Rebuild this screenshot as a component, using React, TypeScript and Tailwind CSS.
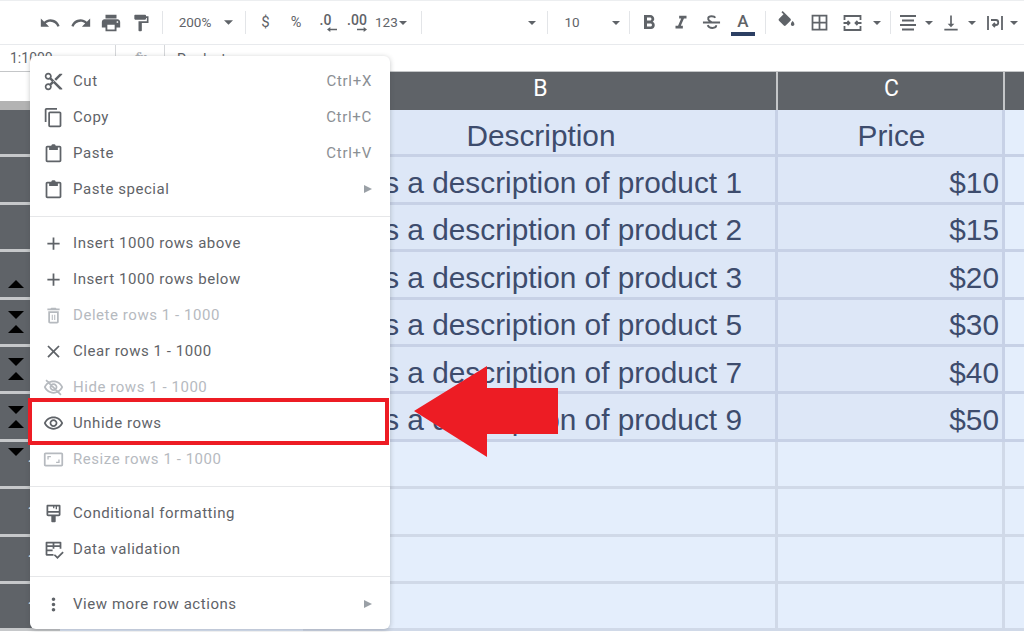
import React from "react";

const P = {
  undo: "M12.5 8c-2.65 0-5.05.99-6.9 2.6L2 7v9h9l-3.62-3.62c1.39-1.16 3.16-1.88 5.12-1.88 3.54 0 6.55 2.31 7.6 5.5l2.37-.78C21.08 11.03 17.15 8 12.5 8z",
  redo: "M18.4 10.6C16.55 8.99 14.15 8 11.5 8c-4.65 0-8.58 3.03-9.96 7.22L3.9 16c1.05-3.19 4.05-5.5 7.6-5.5 1.95 0 3.73.72 5.12 1.88L13 16h9V7l-3.6 3.6z",
  print: "M19 8H5c-1.66 0-3 1.34-3 3v6h4v4h12v-4h4v-6c0-1.66-1.34-3-3-3zm-3 11H8v-5h8v5zm3-7c-.55 0-1-.45-1-1s.45-1 1-1 1 .45 1 1-.45 1-1 1zm-1-9H6v4h12V3z",
  paint: "M18 4V3c0-.55-.45-1-1-1H5c-.55 0-1 .45-1 1v4c0 .55.45 1 1 1h12c.55 0 1-.45 1-1V6h1v4H9v11c0 .55.45 1 1 1h2c.55 0 1-.45 1-1v-9h8V4h-3z",
  bold: "M15.6 10.79c.97-.67 1.65-1.77 1.65-2.79 0-2.26-1.75-4-4-4H7v14h7.04c2.09 0 3.71-1.7 3.71-3.79 0-1.52-.86-2.82-2.15-3.42zM10 6.5h3c.83 0 1.5.67 1.5 1.5s-.67 1.5-1.5 1.5h-3v-3zm3.5 9H10v-3h3.5c.83 0 1.5.67 1.5 1.5s-.67 1.5-1.5 1.5z",
  italic: "M10 4v3h2.21l-3.42 8H6v3h8v-3h-2.21l3.42-8H18V4z",
  fill: "M16.56 8.94L7.62 0 6.21 1.41l2.38 2.38-5.15 5.15c-.59.59-.59 1.54 0 2.12l5.5 5.5c.29.29.68.44 1.06.44s.77-.15 1.06-.44l5.5-5.5c.59-.58.59-1.53 0-2.12zM19 11.5s-2 2.17-2 3.5c0 1.1.9 2 2 2s2-.9 2-2c0-1.33-2-3.5-2-3.5z",
  borders: "M3 3v18h18V3H3zm8 16H5v-6h6v6zm0-8H5V5h6v6zm8 8h-6v-6h6v6zm0-8h-6V5h6v6z",
  valign: "M16 13h-3V3h-2v10H8l4 4 4-4zM4 19v2h16v-2H4z",
  cut: "M9.64 7.64c.23-.5.36-1.05.36-1.64 0-2.21-1.79-4-4-4S2 3.79 2 6s1.79 4 4 4c.59 0 1.14-.13 1.64-.36L10 12l-2.36 2.36C7.14 14.13 6.59 14 6 14c-2.21 0-4 1.79-4 4s1.79 4 4 4 4-1.79 4-4c0-.59-.13-1.14-.36-1.64L12 14l7 7h3v-1L9.64 7.64zM6 8c-1.1 0-2-.89-2-2s.9-2 2-2 2 .89 2 2-.9 2-2 2zm0 12c-1.1 0-2-.89-2-2s.9-2 2-2 2 .89 2 2-.9 2-2 2zm6-7.5c-.28 0-.5-.22-.5-.5s.22-.5.5-.5.5.22.5.5-.22.5-.5.5zM19 3l-6 6 2 2 7-7V3z",
  copy: "M16 1H4c-1.1 0-2 .9-2 2v14h2V3h12V1zm3 4H8c-1.1 0-2 .9-2 2v14c0 1.1.9 2 2 2h11c1.1 0 2-.9 2-2V7c0-1.1-.9-2-2-2zm0 16H8V7h11v14z",
  add: "M19 13h-6v6h-2v-6H5v-2h6V5h2v6h6v2z",
  del: "M6 19c0 1.1.9 2 2 2h8c1.1 0 2-.9 2-2V7H6v12zM8 9h8v10H8V9zm7.5-5l-1-1h-5l-1 1H5v2h14V4zM10 11h1.2v6H10zM12.8 11H14v6h-1.2z",
  close: "M19 6.41L17.59 5 12 10.59 6.41 5 5 6.41 10.59 12 5 17.59 6.41 19 12 13.41 17.59 19 19 17.59 13.41 12z",
  eye: "M12 6c3.79 0 7.17 2.13 8.82 5.5C19.17 14.87 15.79 17 12 17s-7.17-2.13-8.82-5.5C4.83 8.13 8.21 6 12 6m0-2C7 4 2.73 7.11 1 11.5 2.73 15.89 7 19 12 19s9.27-3.11 11-7.5C21.27 7.11 17 4 12 4zm0 5c1.38 0 2.5 1.12 2.5 2.5S13.38 14 12 14s-2.5-1.12-2.5-2.5S10.62 9 12 9m0-2c-2.48 0-4.5 2.02-4.5 4.5S9.52 16 12 16s4.5-2.02 4.5-4.5S14.48 7 12 7z",
  eyeoff: "M12 6c3.79 0 7.17 2.13 8.82 5.5C19.17 14.87 15.79 17 12 17s-7.17-2.13-8.82-5.5C4.83 8.13 8.21 6 12 6m0-2C7 4 2.73 7.11 1 11.5 2.73 15.89 7 19 12 19s9.27-3.11 11-7.5C21.27 7.11 17 4 12 4zm0 5c1.38 0 2.5 1.12 2.5 2.5S13.38 14 12 14s-2.5-1.12-2.5-2.5S10.62 9 12 9m0-2c-2.48 0-4.5 2.02-4.5 4.5S9.52 16 12 16s4.5-2.02 4.5-4.5S14.48 7 12 7zM4.2 2.8L2.8 4.2l17 17 1.4-1.4z",
  paste: "M19 3h-4.5c-.2-1-1-1.6-2.5-1.6S9.700 2 9.500 3H5c-1.1 0-2 .9-2 2v15c0 1.1.9 2 2 2h14c1.100 0 2-.9 2-2V5c0-1.100-.9-2-2-2zm0 17H5V5h2v3h10V5h2v15z",
  roller: "M5 2h14c.55 0 1 .45 1 1v10c0 1.100-.9 2-2 2h-3.500v6c0 .55-.45 1-1 1h-3c-.55 0-1-.45-1-1v-6H6c-1.100 0-2-.9-2-2V3c0-.55.45-1 1-1zm1 2v5h12V4h-2v3h-1.500V4h-1.500v2h-1.500V4zm0 7v2h12v-2z",
  table: "M3 3h17c.55 0 1 .45 1 1v7h-2V9h-6v2h-2V9H5v3h6v2H5v3h7v2H4c-.55 0-1-.45-1-1V4c0-.55.45-1 1-1zm2 2v2h6V5zm8 0v2h6V5zm9.300 9.300l1.400 1.400-7.200 7.200-4.200-4.200 1.400-1.400 2.800 2.800z",
  resize: "M3 4h18c1.100 0 2 .9 2 2v12c0 1.100-.9 2-2 2H3c-1.100 0-2-.9-2-2V6c0-1.100.9-2 2-2zm0 2v12h18V6zm2 2h4v1.500H6.500V12H5zm14 8h-4v-1.500h2.500V12H19z",
  more: "M12 8c1.100 0 2-.9 2-2s-.9-2-2-2-2 .9-2 2 .9 2 2 2zm0 2c-1.100 0-2 .9-2 2s.9 2 2 2 2-.9 2-2-.9-2-2-2zm0 6c-1.100 0-2 .9-2 2s.9 2 2 2 2-.9 2-2-.9-2-2-2z",
};

function Ico({ d, cls }: { d: string; cls: string }) {
  return (
    <svg viewBox="0 0 24 24" className={cls} fill="currentColor" aria-hidden="true">
      <path d={d} />
    </svg>
  );
}

function Caret({ cls = "w-[8px] h-[4px]" }: { cls?: string }) {
  return (
    <svg viewBox="0 0 10 5" className={`${cls} shrink-0`} fill="currentColor" aria-hidden="true">
      <path d="M0 0h10L5 5z" />
    </svg>
  );
}

function Sep() {
  return <div className="w-px h-[23px] bg-[#e3e5e8] shrink-0" />;
}

function Slot({ w, children }: { w: string; children?: React.ReactNode }) {
  return <div className={`${w} shrink-0 flex items-center justify-center`}>{children}</div>;
}

function Toolbar() {
  return (
    <div className="h-[43px] shrink-0 border-b border-[#e8eaed] flex items-center pl-[34px] text-[#5f6368] text-[13.5px] pb-[1px] font-['Roboto',sans-serif]">
      <Slot w="w-[31px]"><Ico d={P.undo} cls="w-[22px] h-[22px]" /></Slot>
      <Slot w="w-[31px]"><Ico d={P.redo} cls="w-[22px] h-[22px]" /></Slot>
      <Slot w="w-[30px]"><Ico d={P.print} cls="w-[22px] h-[22px]" /></Slot>
      <Slot w="w-[30px]"><Ico d={P.paint} cls="w-[20px] h-[20px]" /></Slot>
      <div className="w-[6px] shrink-0" />
      <Sep />
      <Slot w="w-[48px]"><span className="ml-[16px]">200%</span></Slot>
      <Slot w="w-[34px]"><Caret cls="w-[9px] h-[5px]" /></Slot>
      <Sep />
      <Slot w="w-[39px]"><span className="text-[15px]">$</span></Slot>
      <Slot w="w-[22px]"><span className="text-[14.5px]">%</span></Slot>
      <Slot w="w-[38px]">
        <span className="flex flex-col items-end leading-[13px] -mr-[5px]">
          <span className="font-medium text-[14px] pr-[6px]">.0</span>
          <svg viewBox="0 0 12 6" className="w-[10px] h-[5px]" fill="currentColor" aria-hidden="true"><path d="M0 3l4-3v2h8v2H4v2z" /></svg>
        </span>
      </Slot>
      <Slot w="w-[24px]">
        <span className="flex flex-col items-end leading-[13px]">
          <span className="font-medium text-[14px]">.00</span>
          <svg viewBox="0 0 12 6" className="w-[10px] h-[5px]" fill="currentColor" aria-hidden="true"><path d="M12 3L8 0v2H0v2h8v2z" /></svg>
        </span>
      </Slot>
      <div className="w-[52px] shrink-0 flex items-center gap-[1px] pl-[6px]">
        <span className="text-[13.5px]">123</span>
        <Caret />
      </div>
      <Sep />
      <div className="w-[100px] shrink-0" />
      <Slot w="w-[20px]"><Caret /></Slot>
      <div className="w-[5px] shrink-0" />
      <Sep />
      <Slot w="w-[48px]"><span className="text-[13.5px]">10</span></Slot>
      <div className="w-[10px] shrink-0" />
      <Slot w="w-[20px]"><Caret /></Slot>
      <div className="w-[3px] shrink-0" />
      <Sep />
      <Slot w="w-[37px]"><Ico d={P.bold} cls="w-[24px] h-[24px]" /></Slot>
      <Slot w="w-[27px]"><Ico d={P.italic} cls="w-[22px] h-[22px]" /></Slot>
      <Slot w="w-[34px]">
        <svg viewBox="0 0 20 20" className="w-[19px] h-[19px]" fill="none" stroke="currentColor" strokeWidth="2" aria-hidden="true">
          <path d="M1 10h18M14 5c-1-2-7-2.500-7.500.5C6 8 9 9 10 9.500M15 13c0 3.500-7.500 4-9-.2" />
        </svg>
      </Slot>
      <Slot w="w-[30px]">
        <span className="flex flex-col items-center">
          <span className="font-medium text-[17px] leading-[19px] mt-[2px]">A</span>
          <span className="w-[24px] h-[4px] bg-[#2c3f63] mt-[1px]" />
        </span>
      </Slot>
      <div className="w-[7px] shrink-0" />
      <Sep />
      <Slot w="w-[40px]"><Ico d={P.fill} cls="w-[21px] h-[21px] -mt-[3px]" /></Slot>
      <Slot w="w-[26px]"><Ico d={P.borders} cls="w-[21px] h-[21px]" /></Slot>
      <Slot w="w-[40px]">
        <svg viewBox="0 0 18 16" className="w-[19px] h-[16px]" fill="none" stroke="currentColor" strokeWidth="1.800" aria-hidden="true">
          <path d="M1 5V1h16v4M1 11v4h16v-4M0 8h6M18 8h-6M4 6l2 2-2 2M14 6l-2 2 2 2" />
        </svg>
      </Slot>
      <Slot w="w-[10px]"><Caret /></Slot>
      <div className="w-[8px] shrink-0" />
      <Sep />
      <Slot w="w-[34px]">
        <svg viewBox="0 0 16 16" className="w-[16px] h-[16px]" fill="currentColor" aria-hidden="true">
          <path d="M0 0h16v2H0zM2 4.500h12v2H2zM0 9h16v2H0zM2 13.500h12v2H2z" />
        </svg>
      </Slot>
      <Slot w="w-[8px]"><Caret /></Slot>
      <Slot w="w-[35px]"><Ico d={P.valign} cls="w-[20px] h-[20px]" /></Slot>
      <Slot w="w-[8px]"><Caret /></Slot>
      <div className="w-[4px] shrink-0" />
      <Slot w="w-[30px]">
        <svg viewBox="0 0 16 16" className="w-[16px] h-[16px]" fill="none" stroke="currentColor" strokeWidth="1.800" aria-hidden="true">
          <path d="M1 1v14M15 1v14M4 5h5c3 0 3 5 0 5H6M8 8l-2 2 2 2" />
        </svg>
      </Slot>
      <Slot w="w-[8px]"><Caret /></Slot>
    </div>
  );
}

function FormulaBar() {
  return (
    <div className="h-[26px] shrink-0 flex items-start text-[#5f6368] font-['Roboto',sans-serif] text-[14px] bg-white">
      <span className="ml-[10px] w-[105px] mt-[4px] leading-[18px]">1:1000</span>
      <div className="w-px h-[12px] bg-[#d5d7da]" />
      <span className="ml-[19px] w-[29px] mt-[4px] leading-[18px] italic font-serif text-[#b0b3b8] font-bold">fx</span>
      <div className="w-px h-[12px] bg-[#d5d7da]" />
      <span className="ml-[12px] mt-[5px] leading-[18px]">Product</span>
    </div>
  );
}

type Row = { desc?: string; price?: string; num: string; data: boolean; head?: boolean; tri: ("up" | "down")[]; triPad?: string };

const ROWS: Row[] = [
  { num: "1", data: true, head: true, desc: "Description", price: "Price", tri: [] },
  { num: "2", data: true, desc: "This is a description of product 1", price: "$10", tri: [] },
  { num: "3", data: true, desc: "This is a description of product 2", price: "$15", tri: [] },
  { num: "4", data: true, desc: "This is a description of product 3", price: "$20", tri: ["up"], triPad: "pt-[19px]" },
  { num: "6", data: true, desc: "This is a description of product 5", price: "$30", tri: ["down", "up"] },
  { num: "8", data: true, desc: "This is a description of product 7", price: "$40", tri: ["down", "up"] },
  { num: "10", data: true, desc: "This is a description of product 9", price: "$50", tri: ["down", "up"] },
  { num: "12", data: false, tri: ["down"], triPad: "pb-[7px]" },
  { num: "13", data: false, tri: [] },
  { num: "14", data: false, tri: [] },
  { num: "15", data: false, tri: [] },
];

function Tri({ dir }: { dir: "up" | "down" }) {
  return (
    <svg viewBox="0 0 16 8" className="w-[16px] h-[8px]" fill="#000" aria-hidden="true">
      <path d={dir === "up" ? "M8 0l8 8H0z" : "M0 0h16L8 8z"} />
    </svg>
  );
}

function SheetGrid() {
  return (
    <div className="flex-1 min-h-0 font-['Liberation_Sans',Arial,sans-serif]">
      <div className="grid grid-cols-[303px_475px_227px_1fr] h-[39px] text-white font-['Roboto',sans-serif] text-[23px] border-t border-[#c4c6c8]">
        <div className="flex">
          <div className="w-[60px] h-[38px] bg-white border-b-[9px] border-[#b3b3b3]" />
          <div className="flex-1 bg-[#5f6368] border-b-2 border-[#c4c6c8]" />
        </div>
        <div className="bg-[#5f6368] border-r-2 border-b-2 border-[#c4c6c8] flex items-center justify-center pb-[3px] pl-[2px]">B</div>
        <div className="bg-[#5f6368] border-r-2 border-b-2 border-[#c4c6c8] flex items-center justify-center pb-[3px] pl-[2px]">C</div>
        <div className="bg-[#5f6368] border-b-2 border-[#c4c6c8]" />
      </div>
      {ROWS.map((r) => (
        <div key={r.num} className="grid grid-cols-[60px_243px_475px_227px_1fr] grid-rows-[47.4px] h-[47.4px]">
          <div className={`bg-[#5f6368] border-b-[3px] border-[#c6c8ca] relative flex flex-col justify-center gap-[6px] text-white text-[17px] leading-[22px] font-['Roboto',sans-serif] ${r.triPad ?? ""}`}>
            <span className="absolute left-0 w-[74px] text-center top-[12px]">{r.num}</span>
            {r.tri.map((t, i) => (
              <span key={i} className={`ml-[8px] flex ${r.num === "12" ? "-mt-[16px]" : ""}`}>
                <Tri dir={t} />
              </span>
            ))}
          </div>
          <div className="bg-[#dde7f8]" />
          <div
            className={`${r.data ? "bg-[#dde7f7] border-[#c7d1e6]" : "bg-[#e4eefc] border-[#d0d9e8]"} border-r-[3px] border-b-[3px] flex items-center pt-[7px] text-[29.8px] leading-[34px] text-[#3d4c6d] whitespace-nowrap overflow-hidden ${r.head ? "justify-center pl-[4px]" : "pl-[10px]"}`}
          >
            {r.desc}
          </div>
          <div
            className={`${r.data ? "bg-[#dde7f7] border-[#c7d1e6]" : "bg-[#e4eefc] border-[#d0d9e8]"} border-r-[3px] border-b-[3px] flex items-center pt-[7px] text-[29.8px] leading-[34px] text-[#3d4c6d] ${r.head ? "justify-center pl-[3px]" : "justify-end pr-[3px]"}`}
          >
            {r.price}
          </div>
          <div className={`bg-[#e4eefc] border-b-[3px] ${r.data ? "border-[#c7d1e6]" : "border-[#d0d9e8]"}`} />
        </div>
      ))}
    </div>
  );
}

function Item({
  d,
  label,
  hint,
  arrow,
  off,
  icon = "w-[21px] h-[21px]",
}: {
  d: string;
  label: string;
  hint?: string;
  arrow?: boolean;
  off?: boolean;
  icon?: string;
}) {
  return (
    <div className={`h-[36px] flex items-center pr-[18px] ${off ? "text-[#b6babf]" : "text-[#5f6368]"}`}>
      <span className="w-[43px] flex justify-center pl-[3px] shrink-0">
        <Ico d={d} cls={icon} />
      </span>
      <span className="flex-1 text-[15px] tracking-[0.55px] whitespace-nowrap">{label}</span>
      {hint && <span className="text-[15px] tracking-[0.7px] text-[#8b8f94]">{hint}</span>}
      {arrow && (
        <svg viewBox="0 0 8 8" className="w-[8px] h-[8px] text-[#9aa0a6]" fill="currentColor" aria-hidden="true">
          <path d="M0 0l8 4-8 4z" />
        </svg>
      )}
    </div>
  );
}

function Menu() {
  return (
    <div className="absolute left-[30px] top-[56px] w-[360px] h-[573px] bg-white rounded-[6px] shadow-[0_1px_5px_rgba(60,64,67,0.3)] pt-[7px] font-['Roboto',sans-serif]">
      <Item d={P.cut} label="Cut" hint="Ctrl+X" />
      <Item d={P.copy} label="Copy" hint="Ctrl+C" />
      <Item d={P.paste} label="Paste" hint="Ctrl+V" />
      <Item d={P.paste} label="Paste special" arrow />
      <div className="h-px bg-[#e6e7e9] mt-[9px] mb-[8px]" />
      <Item d={P.add} label="Insert 1000 rows above" />
      <Item d={P.add} label="Insert 1000 rows below" />
      <Item d={P.del} label="Delete rows 1 - 1000" off />
      <Item d={P.close} label="Clear rows 1 - 1000" />
      <Item d={P.eyeoff} label="Hide rows 1 - 1000" off />
      <Item d={P.eye} label="Unhide rows" />
      <Item d={P.resize} label="Resize rows 1 - 1000" off />
      <div className="h-px bg-[#e6e7e9] mt-[9px] mb-[8px]" />
      <Item d={P.roller} label="Conditional formatting" />
      <Item d={P.table} label="Data validation" />
      <div className="h-px bg-[#e6e7e9] mt-[9px] mb-[9px]" />
      <Item d={P.more} label="View more row actions" arrow />
      <div className="absolute left-[-2px] top-[342px] w-[361px] h-[47px] border-[4px] border-[#ed1c24]" />
    </div>
  );
}

export default function App() {
  return (
    <div className="relative w-[1024px] h-[632px] overflow-hidden bg-white flex flex-col">
      <div className="h-[2px] shrink-0 border-t border-[#eceef0]" />
      <Toolbar />
      <FormulaBar />
      <SheetGrid />
      <Menu />
      <svg viewBox="0 0 146 92" className="absolute left-[413px] top-[366px] w-[146px] h-[92px]" aria-hidden="true">
        <path d="M1 45L74 0v22h71v46H74v23z" fill="#ed1c24" />
      </svg>
    </div>
  );
}
